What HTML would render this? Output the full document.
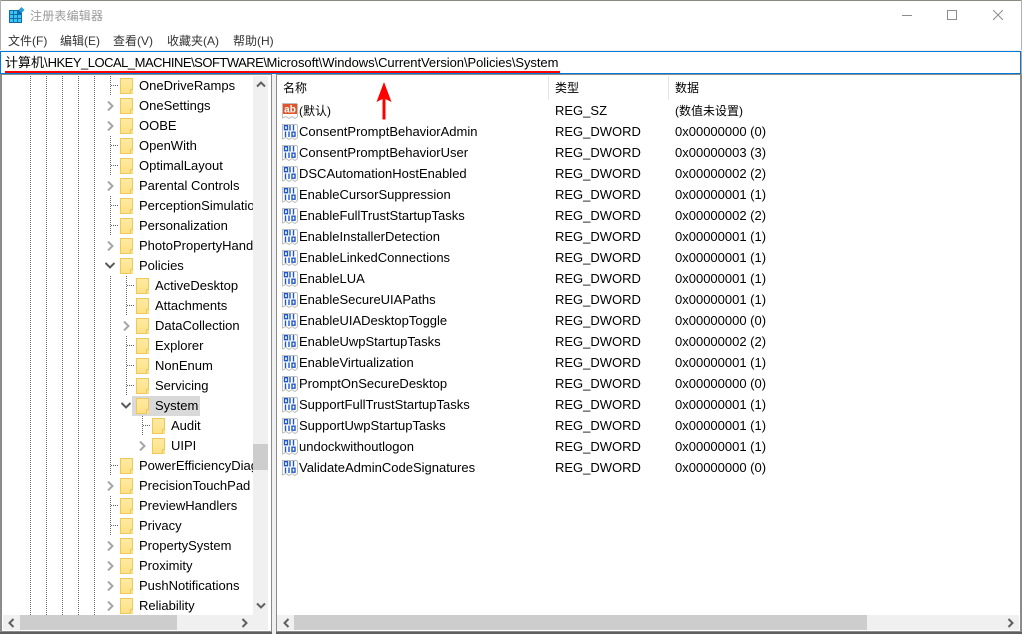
<!DOCTYPE html>
<html><head><meta charset="utf-8"><title>注册表编辑器</title>
<style>
html,body{margin:0;padding:0;background:#fff}
#w{position:relative;width:1022px;height:634px;overflow:hidden;background:#fff;font:13px "Liberation Sans","Noto Sans CJK SC",sans-serif;color:#000}
#w div,#w svg{position:absolute}
.t{white-space:nowrap;line-height:20px;height:20px}
.m{top:32px;line-height:18px;color:#333;font-size:12px;white-space:nowrap}
.f{width:11px;height:14px;border:1px solid #eec858;background:linear-gradient(180deg,#ffeaa2,#fde086)}
.f:after{content:"";position:absolute;right:-1px;bottom:-1px;width:2px;height:4px;border-left:1px solid #eec858;border-top:1px solid #eec858;background:#fde086}
.v{width:1px;background:repeating-linear-gradient(#666 0 1px,transparent 1px 2px)}
.h{height:1px;width:8px;background:repeating-linear-gradient(90deg,#666 0 1px,transparent 1px 2px)}
.c{width:11px;height:20px;background:#fff}
.k{left:299px}.y{left:555px}.d{left:675px}
.z{font-size:12px}
</style></head><body><div id="w">

<div style="left:0;top:0;width:1022px;height:1px;background:#8a8a80"></div>
<div style="left:0;top:0;width:1px;height:74px;background:#b0b0b0"></div>
<div style="left:1021px;top:0;width:1px;height:74px;background:#b0b0b0"></div>
<div style="left:0;top:74px;width:2px;height:560px;background:#8b8b8b"></div>
<div style="left:1020px;top:74px;width:2px;height:560px;background:#8b8b8b"></div>
<div style="left:0;top:632px;width:1022px;height:2px;background:#5f5f5f"></div>

<svg style="left:9px;top:7px" width="16" height="17" viewBox="0 0 16 17"><rect x="0" y="3" width="13" height="13" fill="#0d6ea8"/><g fill="#3cc4f5"><rect x="1" y="4" width="3" height="3"/><rect x="5" y="4" width="3" height="3"/><rect x="1" y="8" width="3" height="3"/><rect x="5" y="8" width="3" height="3"/><rect x="9" y="8" width="3" height="3"/><rect x="1" y="12" width="3" height="3"/><rect x="5" y="12" width="3" height="3"/><rect x="9" y="12" width="3" height="3"/></g><path d="M12.5 0l3 3-3 3-3-3z" fill="#2a9fd6"/></svg>
<div class="t" style="left:30px;top:6px;color:#9a9a9a;font-size:12px;letter-spacing:.2px">注册表编辑器</div>
<div style="left:902px;top:15px;width:10px;height:1px;background:#8c8c8c"></div>
<div style="left:947px;top:10px;width:8px;height:8px;border:1px solid #8c8c8c"></div>
<svg style="left:993px;top:10px" width="10" height="10" viewBox="0 0 10 10"><path d="M0 0L10 10M10 0L0 10" stroke="#8c8c8c" stroke-width="1" fill="none"/></svg>

<div class="m" style="left:8px">文件(F)</div>
<div class="m" style="left:60px">编辑(E)</div>
<div class="m" style="left:113px">查看(V)</div>
<div class="m" style="left:167px">收藏夹(A)</div>
<div class="m" style="left:233px">帮助(H)</div>

<div style="left:0;top:50px;width:1022px;height:1px;background:#f0f0f0"></div>
<div style="left:0;top:51px;width:1019px;height:21px;border:1px solid #0078d7"></div>
<div class="t" style="left:5px;top:53px;font-size:13px">计算机\<span style="letter-spacing:-.5px">HKEY_LOCAL_MACHINE\SOFTWARE\</span><span style="letter-spacing:-.06px">Microsoft\Windows\CurrentVersion\Policies\System</span></div>
<div style="left:5px;top:71px;width:555px;height:2px;background:#f00"></div>

<div style="left:2px;top:74px;width:269px;height:1px;background:#8b8b8b"></div>
<div style="left:276px;top:74px;width:744px;height:1px;background:#8b8b8b"></div>
<div style="left:272px;top:74px;width:4px;height:560px;background:#f0f0f0"></div>
<div style="left:271px;top:74px;width:1px;height:558px;background:#8b8b8b"></div>
<div style="left:276px;top:74px;width:1px;height:558px;background:#8b8b8b"></div>
<div style="left:2px;top:631px;width:270px;height:1px;background:#8b8b8b"></div>
<div style="left:276px;top:631px;width:744px;height:1px;background:#8b8b8b"></div>

<!-- tree -->
<div style="left:2px;top:76px;width:251px;height:539px;overflow:hidden">
<div style="left:0;top:0;width:251px;height:539px">
<div class="v" style="left:28px;top:0;height:539px"></div>
<div class="v" style="left:44px;top:0;height:539px"></div>
<div class="v" style="left:60px;top:0;height:539px"></div>
<div class="v" style="left:76px;top:0;height:539px"></div>
<div class="v" style="left:92px;top:0;height:539px"></div>
<div class="v" style="left:108px;top:0;height:536px"></div>
<div class="v" style="left:124px;top:200px;height:120px"></div>
<div class="v" style="left:140px;top:340px;height:21px"></div>
</div></div>

<div class="h" style="left:111px;top:85px"></div>
<div class="h" style="left:111px;top:145px"></div>
<div class="h" style="left:111px;top:165px"></div>
<div class="h" style="left:111px;top:205px"></div>
<div class="h" style="left:111px;top:225px"></div>
<div class="h" style="left:111px;top:465px"></div>
<div class="h" style="left:111px;top:505px"></div>
<div class="h" style="left:111px;top:525px"></div>
<div class="h" style="left:127px;top:285px"></div>
<div class="h" style="left:127px;top:305px"></div>
<div class="h" style="left:127px;top:345px"></div>
<div class="h" style="left:127px;top:365px"></div>
<div class="h" style="left:127px;top:385px"></div>
<div class="h" style="left:143px;top:425px"></div>

<div style="left:132px;top:396px;width:68px;height:20px;background:#d9d9d9"></div>

<!-- chevrons -->
<div class="c" style="left:105px;top:96px"></div><svg style="left:107px;top:101px" width="7" height="10"><path d="M1 0.5L5.5 5L1 9.5" stroke="#a6a6a6" stroke-width="2" fill="none"/></svg>
<div class="c" style="left:105px;top:116px"></div><svg style="left:107px;top:121px" width="7" height="10"><path d="M1 0.5L5.5 5L1 9.5" stroke="#a6a6a6" stroke-width="2" fill="none"/></svg>
<div class="c" style="left:105px;top:176px"></div><svg style="left:107px;top:181px" width="7" height="10"><path d="M1 0.5L5.5 5L1 9.5" stroke="#a6a6a6" stroke-width="2" fill="none"/></svg>
<div class="c" style="left:105px;top:236px"></div><svg style="left:107px;top:241px" width="7" height="10"><path d="M1 0.5L5.5 5L1 9.5" stroke="#a6a6a6" stroke-width="2" fill="none"/></svg>
<div class="c" style="left:105px;top:256px"></div><svg style="left:105px;top:262px" width="10" height="7"><path d="M0.5 1L5 5.5L9.5 1" stroke="#595959" stroke-width="2" fill="none"/></svg>
<div class="c" style="left:105px;top:476px"></div><svg style="left:107px;top:481px" width="7" height="10"><path d="M1 0.5L5.5 5L1 9.5" stroke="#a6a6a6" stroke-width="2" fill="none"/></svg>
<div class="c" style="left:105px;top:536px"></div><svg style="left:107px;top:541px" width="7" height="10"><path d="M1 0.5L5.5 5L1 9.5" stroke="#a6a6a6" stroke-width="2" fill="none"/></svg>
<div class="c" style="left:105px;top:556px"></div><svg style="left:107px;top:561px" width="7" height="10"><path d="M1 0.5L5.5 5L1 9.5" stroke="#a6a6a6" stroke-width="2" fill="none"/></svg>
<div class="c" style="left:105px;top:576px"></div><svg style="left:107px;top:581px" width="7" height="10"><path d="M1 0.5L5.5 5L1 9.5" stroke="#a6a6a6" stroke-width="2" fill="none"/></svg>
<div class="c" style="left:105px;top:596px"></div><svg style="left:107px;top:601px" width="7" height="10"><path d="M1 0.5L5.5 5L1 9.5" stroke="#a6a6a6" stroke-width="2" fill="none"/></svg>
<div class="c" style="left:121px;top:316px"></div><svg style="left:123px;top:321px" width="7" height="10"><path d="M1 0.5L5.5 5L1 9.5" stroke="#a6a6a6" stroke-width="2" fill="none"/></svg>
<div class="c" style="left:121px;top:396px"></div><svg style="left:121px;top:402px" width="10" height="7"><path d="M0.5 1L5 5.5L9.5 1" stroke="#595959" stroke-width="2" fill="none"/></svg>
<div class="c" style="left:137px;top:436px"></div><svg style="left:139px;top:441px" width="7" height="10"><path d="M1 0.5L5.5 5L1 9.5" stroke="#a6a6a6" stroke-width="2" fill="none"/></svg>

<!-- folders -->
<div class="f" style="left:120px;top:78px"></div>
<div class="f" style="left:120px;top:98px"></div>
<div class="f" style="left:120px;top:118px"></div>
<div class="f" style="left:120px;top:138px"></div>
<div class="f" style="left:120px;top:158px"></div>
<div class="f" style="left:120px;top:178px"></div>
<div class="f" style="left:120px;top:198px"></div>
<div class="f" style="left:120px;top:218px"></div>
<div class="f" style="left:120px;top:238px"></div>
<div class="f" style="left:120px;top:258px"></div>
<div class="f" style="left:136px;top:278px"></div>
<div class="f" style="left:136px;top:298px"></div>
<div class="f" style="left:136px;top:318px"></div>
<div class="f" style="left:136px;top:338px"></div>
<div class="f" style="left:136px;top:358px"></div>
<div class="f" style="left:136px;top:378px"></div>
<div class="f" style="left:136px;top:398px"></div>
<div class="f" style="left:152px;top:418px"></div>
<div class="f" style="left:152px;top:438px"></div>
<div class="f" style="left:120px;top:458px"></div>
<div class="f" style="left:120px;top:478px"></div>
<div class="f" style="left:120px;top:498px"></div>
<div class="f" style="left:120px;top:518px"></div>
<div class="f" style="left:120px;top:538px"></div>
<div class="f" style="left:120px;top:558px"></div>
<div class="f" style="left:120px;top:578px"></div>
<div class="f" style="left:120px;top:598px"></div>

<!-- tree labels -->
<div style="left:0;top:0;width:253px;height:615px;overflow:hidden">
<div class="t" style="left:139px;top:76px">OneDriveRamps</div>
<div class="t" style="left:139px;top:96px">OneSettings</div>
<div class="t" style="left:139px;top:116px">OOBE</div>
<div class="t" style="left:139px;top:136px">OpenWith</div>
<div class="t" style="left:139px;top:156px">OptimalLayout</div>
<div class="t" style="left:139px;top:176px">Parental Controls</div>
<div class="t" style="left:139px;top:196px">PerceptionSimulationExt</div>
<div class="t" style="left:139px;top:216px">Personalization</div>
<div class="t" style="left:139px;top:236px">PhotoPropertyHandler</div>
<div class="t" style="left:139px;top:256px">Policies</div>
<div class="t" style="left:155px;top:276px">ActiveDesktop</div>
<div class="t" style="left:155px;top:296px">Attachments</div>
<div class="t" style="left:155px;top:316px">DataCollection</div>
<div class="t" style="left:155px;top:336px">Explorer</div>
<div class="t" style="left:155px;top:356px">NonEnum</div>
<div class="t" style="left:155px;top:376px">Servicing</div>
<div class="t" style="left:155px;top:396px">System</div>
<div class="t" style="left:171px;top:416px">Audit</div>
<div class="t" style="left:171px;top:436px">UIPI</div>
<div class="t" style="left:139px;top:456px">PowerEfficiencyDiagnostics</div>
<div class="t" style="left:139px;top:476px">PrecisionTouchPad</div>
<div class="t" style="left:139px;top:496px">PreviewHandlers</div>
<div class="t" style="left:139px;top:516px">Privacy</div>
<div class="t" style="left:139px;top:536px">PropertySystem</div>
<div class="t" style="left:139px;top:556px">Proximity</div>
<div class="t" style="left:139px;top:576px">PushNotifications</div>
<div class="t" style="left:139px;top:596px">Reliability</div>
</div>

<!-- tree scrollbars -->
<div style="left:253px;top:76px;width:15px;height:539px;background:#f0f0f0"></div>
<div style="left:253px;top:444px;width:15px;height:26px;background:#cdcdcd"></div>
<svg style="left:256px;top:81px" width="10" height="7"><path d="M1 5.5L5 1.5L9 5.5" stroke="#606060" stroke-width="2" fill="none"/></svg>
<svg style="left:256px;top:602px" width="10" height="7"><path d="M1 1.5L5 5.5L9 1.5" stroke="#606060" stroke-width="2" fill="none"/></svg>
<div style="left:3px;top:615px;width:265px;height:15px;background:#f0f0f0"></div>
<div style="left:20px;top:615px;width:157px;height:15px;background:#cdcdcd"></div>
<svg style="left:8px;top:618px" width="7" height="10"><path d="M5.5 1L1.5 5L5.5 9" stroke="#606060" stroke-width="2" fill="none"/></svg>
<svg style="left:241px;top:618px" width="7" height="10"><path d="M1.5 1L5.5 5L1.5 9" stroke="#606060" stroke-width="2" fill="none"/></svg>

<!-- list header -->
<div class="t z" style="left:283px;top:78px">名称</div>
<div class="t z" style="left:555px;top:78px">类型</div>
<div class="t z" style="left:675px;top:78px">数据</div>
<div style="left:548px;top:76px;width:1px;height:24px;background:#e5e5e5"></div>
<div style="left:668px;top:76px;width:1px;height:24px;background:#e5e5e5"></div>

<!-- list rows -->
<svg style="left:282px;top:103px" width="16" height="16" viewBox="0 0 16 16"><path d="M0.5 0.5H14.5L15.5 1.5V13.5L13 15.5 10 13.5 7 15.5 4 13.5 0.5 15z" fill="#fff" stroke="#bdbdbd"/><rect x="1" y="1" width="14" height="10" fill="#e0552a"/><text x="8" y="9.5" font-size="10" font-weight="bold" fill="#fff" text-anchor="middle" font-family="Liberation Sans">ab</text></svg>
<div class="t k z" style="top:101px">(默认)</div><div class="t y" style="top:101px">REG_SZ</div><div class="t d z" style="top:101px">(数值未设置)</div>

<svg style="left:282px;top:124px" width="16" height="16" viewBox="0 0 16 16"><path d="M0.5 0.5H14.5L15.5 1.5V13.5L13 15.5 10 13.5 7 15.5 4 13.5 0.5 15z" fill="#fff" stroke="#bdbdbd"/><path d="M2.5 1.7h3v4h-3zM8 1v5.5M11.5 1v5.5M3.5 7.5v5.5M7 7.5v5.5M10 8.2h3v4h-3z" stroke="#1f56d0" stroke-width="1.4" fill="none"/></svg>
<div class="t k" style="top:122px">ConsentPromptBehaviorAdmin</div><div class="t y" style="top:122px">REG_DWORD</div><div class="t d" style="top:122px">0x00000000 (0)</div>

<svg style="left:282px;top:145px" width="16" height="16" viewBox="0 0 16 16"><path d="M0.5 0.5H14.5L15.5 1.5V13.5L13 15.5 10 13.5 7 15.5 4 13.5 0.5 15z" fill="#fff" stroke="#bdbdbd"/><path d="M2.5 1.7h3v4h-3zM8 1v5.5M11.5 1v5.5M3.5 7.5v5.5M7 7.5v5.5M10 8.2h3v4h-3z" stroke="#1f56d0" stroke-width="1.4" fill="none"/></svg>
<div class="t k" style="top:143px">ConsentPromptBehaviorUser</div><div class="t y" style="top:143px">REG_DWORD</div><div class="t d" style="top:143px">0x00000003 (3)</div>

<svg style="left:282px;top:166px" width="16" height="16" viewBox="0 0 16 16"><path d="M0.5 0.5H14.5L15.5 1.5V13.5L13 15.5 10 13.5 7 15.5 4 13.5 0.5 15z" fill="#fff" stroke="#bdbdbd"/><path d="M2.5 1.7h3v4h-3zM8 1v5.5M11.5 1v5.5M3.5 7.5v5.5M7 7.5v5.5M10 8.2h3v4h-3z" stroke="#1f56d0" stroke-width="1.4" fill="none"/></svg>
<div class="t k" style="top:164px">DSCAutomationHostEnabled</div><div class="t y" style="top:164px">REG_DWORD</div><div class="t d" style="top:164px">0x00000002 (2)</div>

<svg style="left:282px;top:187px" width="16" height="16" viewBox="0 0 16 16"><path d="M0.5 0.5H14.5L15.5 1.5V13.5L13 15.5 10 13.5 7 15.5 4 13.5 0.5 15z" fill="#fff" stroke="#bdbdbd"/><path d="M2.5 1.7h3v4h-3zM8 1v5.5M11.5 1v5.5M3.5 7.5v5.5M7 7.5v5.5M10 8.2h3v4h-3z" stroke="#1f56d0" stroke-width="1.4" fill="none"/></svg>
<div class="t k" style="top:185px">EnableCursorSuppression</div><div class="t y" style="top:185px">REG_DWORD</div><div class="t d" style="top:185px">0x00000001 (1)</div>

<svg style="left:282px;top:208px" width="16" height="16" viewBox="0 0 16 16"><path d="M0.5 0.5H14.5L15.5 1.5V13.5L13 15.5 10 13.5 7 15.5 4 13.5 0.5 15z" fill="#fff" stroke="#bdbdbd"/><path d="M2.5 1.7h3v4h-3zM8 1v5.5M11.5 1v5.5M3.5 7.5v5.5M7 7.5v5.5M10 8.2h3v4h-3z" stroke="#1f56d0" stroke-width="1.4" fill="none"/></svg>
<div class="t k" style="top:206px">EnableFullTrustStartupTasks</div><div class="t y" style="top:206px">REG_DWORD</div><div class="t d" style="top:206px">0x00000002 (2)</div>

<svg style="left:282px;top:229px" width="16" height="16" viewBox="0 0 16 16"><path d="M0.5 0.5H14.5L15.5 1.5V13.5L13 15.5 10 13.5 7 15.5 4 13.5 0.5 15z" fill="#fff" stroke="#bdbdbd"/><path d="M2.5 1.7h3v4h-3zM8 1v5.5M11.5 1v5.5M3.5 7.5v5.5M7 7.5v5.5M10 8.2h3v4h-3z" stroke="#1f56d0" stroke-width="1.4" fill="none"/></svg>
<div class="t k" style="top:227px">EnableInstallerDetection</div><div class="t y" style="top:227px">REG_DWORD</div><div class="t d" style="top:227px">0x00000001 (1)</div>

<svg style="left:282px;top:250px" width="16" height="16" viewBox="0 0 16 16"><path d="M0.5 0.5H14.5L15.5 1.5V13.5L13 15.5 10 13.5 7 15.5 4 13.5 0.5 15z" fill="#fff" stroke="#bdbdbd"/><path d="M2.5 1.7h3v4h-3zM8 1v5.5M11.5 1v5.5M3.5 7.5v5.5M7 7.5v5.5M10 8.2h3v4h-3z" stroke="#1f56d0" stroke-width="1.4" fill="none"/></svg>
<div class="t k" style="top:248px">EnableLinkedConnections</div><div class="t y" style="top:248px">REG_DWORD</div><div class="t d" style="top:248px">0x00000001 (1)</div>

<svg style="left:282px;top:271px" width="16" height="16" viewBox="0 0 16 16"><path d="M0.5 0.5H14.5L15.5 1.5V13.5L13 15.5 10 13.5 7 15.5 4 13.5 0.5 15z" fill="#fff" stroke="#bdbdbd"/><path d="M2.5 1.7h3v4h-3zM8 1v5.5M11.5 1v5.5M3.5 7.5v5.5M7 7.5v5.5M10 8.2h3v4h-3z" stroke="#1f56d0" stroke-width="1.4" fill="none"/></svg>
<div class="t k" style="top:269px">EnableLUA</div><div class="t y" style="top:269px">REG_DWORD</div><div class="t d" style="top:269px">0x00000001 (1)</div>

<svg style="left:282px;top:292px" width="16" height="16" viewBox="0 0 16 16"><path d="M0.5 0.5H14.5L15.5 1.5V13.5L13 15.5 10 13.5 7 15.5 4 13.5 0.5 15z" fill="#fff" stroke="#bdbdbd"/><path d="M2.5 1.7h3v4h-3zM8 1v5.5M11.5 1v5.5M3.5 7.5v5.5M7 7.5v5.5M10 8.2h3v4h-3z" stroke="#1f56d0" stroke-width="1.4" fill="none"/></svg>
<div class="t k" style="top:290px">EnableSecureUIAPaths</div><div class="t y" style="top:290px">REG_DWORD</div><div class="t d" style="top:290px">0x00000001 (1)</div>

<svg style="left:282px;top:313px" width="16" height="16" viewBox="0 0 16 16"><path d="M0.5 0.5H14.5L15.5 1.5V13.5L13 15.5 10 13.5 7 15.5 4 13.5 0.5 15z" fill="#fff" stroke="#bdbdbd"/><path d="M2.5 1.7h3v4h-3zM8 1v5.5M11.5 1v5.5M3.5 7.5v5.5M7 7.5v5.5M10 8.2h3v4h-3z" stroke="#1f56d0" stroke-width="1.4" fill="none"/></svg>
<div class="t k" style="top:311px">EnableUIADesktopToggle</div><div class="t y" style="top:311px">REG_DWORD</div><div class="t d" style="top:311px">0x00000000 (0)</div>

<svg style="left:282px;top:334px" width="16" height="16" viewBox="0 0 16 16"><path d="M0.5 0.5H14.5L15.5 1.5V13.5L13 15.5 10 13.5 7 15.5 4 13.5 0.5 15z" fill="#fff" stroke="#bdbdbd"/><path d="M2.5 1.7h3v4h-3zM8 1v5.5M11.5 1v5.5M3.5 7.5v5.5M7 7.5v5.5M10 8.2h3v4h-3z" stroke="#1f56d0" stroke-width="1.4" fill="none"/></svg>
<div class="t k" style="top:332px">EnableUwpStartupTasks</div><div class="t y" style="top:332px">REG_DWORD</div><div class="t d" style="top:332px">0x00000002 (2)</div>

<svg style="left:282px;top:355px" width="16" height="16" viewBox="0 0 16 16"><path d="M0.5 0.5H14.5L15.5 1.5V13.5L13 15.5 10 13.5 7 15.5 4 13.5 0.5 15z" fill="#fff" stroke="#bdbdbd"/><path d="M2.5 1.7h3v4h-3zM8 1v5.5M11.5 1v5.5M3.5 7.5v5.5M7 7.5v5.5M10 8.2h3v4h-3z" stroke="#1f56d0" stroke-width="1.4" fill="none"/></svg>
<div class="t k" style="top:353px">EnableVirtualization</div><div class="t y" style="top:353px">REG_DWORD</div><div class="t d" style="top:353px">0x00000001 (1)</div>

<svg style="left:282px;top:376px" width="16" height="16" viewBox="0 0 16 16"><path d="M0.5 0.5H14.5L15.5 1.5V13.5L13 15.5 10 13.5 7 15.5 4 13.5 0.5 15z" fill="#fff" stroke="#bdbdbd"/><path d="M2.5 1.7h3v4h-3zM8 1v5.5M11.5 1v5.5M3.5 7.5v5.5M7 7.5v5.5M10 8.2h3v4h-3z" stroke="#1f56d0" stroke-width="1.4" fill="none"/></svg>
<div class="t k" style="top:374px">PromptOnSecureDesktop</div><div class="t y" style="top:374px">REG_DWORD</div><div class="t d" style="top:374px">0x00000000 (0)</div>

<svg style="left:282px;top:397px" width="16" height="16" viewBox="0 0 16 16"><path d="M0.5 0.5H14.5L15.5 1.5V13.5L13 15.5 10 13.5 7 15.5 4 13.5 0.5 15z" fill="#fff" stroke="#bdbdbd"/><path d="M2.5 1.7h3v4h-3zM8 1v5.5M11.5 1v5.5M3.5 7.5v5.5M7 7.5v5.5M10 8.2h3v4h-3z" stroke="#1f56d0" stroke-width="1.4" fill="none"/></svg>
<div class="t k" style="top:395px">SupportFullTrustStartupTasks</div><div class="t y" style="top:395px">REG_DWORD</div><div class="t d" style="top:395px">0x00000001 (1)</div>

<svg style="left:282px;top:418px" width="16" height="16" viewBox="0 0 16 16"><path d="M0.5 0.5H14.5L15.5 1.5V13.5L13 15.5 10 13.5 7 15.5 4 13.5 0.5 15z" fill="#fff" stroke="#bdbdbd"/><path d="M2.5 1.7h3v4h-3zM8 1v5.5M11.5 1v5.5M3.5 7.5v5.5M7 7.5v5.5M10 8.2h3v4h-3z" stroke="#1f56d0" stroke-width="1.4" fill="none"/></svg>
<div class="t k" style="top:416px">SupportUwpStartupTasks</div><div class="t y" style="top:416px">REG_DWORD</div><div class="t d" style="top:416px">0x00000001 (1)</div>

<svg style="left:282px;top:439px" width="16" height="16" viewBox="0 0 16 16"><path d="M0.5 0.5H14.5L15.5 1.5V13.5L13 15.5 10 13.5 7 15.5 4 13.5 0.5 15z" fill="#fff" stroke="#bdbdbd"/><path d="M2.5 1.7h3v4h-3zM8 1v5.5M11.5 1v5.5M3.5 7.5v5.5M7 7.5v5.5M10 8.2h3v4h-3z" stroke="#1f56d0" stroke-width="1.4" fill="none"/></svg>
<div class="t k" style="top:437px">undockwithoutlogon</div><div class="t y" style="top:437px">REG_DWORD</div><div class="t d" style="top:437px">0x00000001 (1)</div>

<svg style="left:282px;top:460px" width="16" height="16" viewBox="0 0 16 16"><path d="M0.5 0.5H14.5L15.5 1.5V13.5L13 15.5 10 13.5 7 15.5 4 13.5 0.5 15z" fill="#fff" stroke="#bdbdbd"/><path d="M2.5 1.7h3v4h-3zM8 1v5.5M11.5 1v5.5M3.5 7.5v5.5M7 7.5v5.5M10 8.2h3v4h-3z" stroke="#1f56d0" stroke-width="1.4" fill="none"/></svg>
<div class="t k" style="top:458px">ValidateAdminCodeSignatures</div><div class="t y" style="top:458px">REG_DWORD</div><div class="t d" style="top:458px">0x00000000 (0)</div>

<!-- list scrollbar -->
<div style="left:277px;top:615px;width:742px;height:15px;background:#f0f0f0"></div>
<div style="left:294px;top:615px;width:573px;height:15px;background:#cdcdcd"></div>
<svg style="left:283px;top:618px" width="7" height="10"><path d="M5.5 1L1.5 5L5.5 9" stroke="#606060" stroke-width="2" fill="none"/></svg>
<svg style="left:1007px;top:618px" width="7" height="10"><path d="M1.5 1L5.5 5L1.5 9" stroke="#606060" stroke-width="2" fill="none"/></svg>

<!-- red arrow -->
<svg style="left:376px;top:82px" width="16" height="38" viewBox="0 0 16 38"><path d="M8 0L15.5 20L9.5 17V37.5H6.5V17L.5 20z" fill="#f00"/></svg>

</div></body></html>
